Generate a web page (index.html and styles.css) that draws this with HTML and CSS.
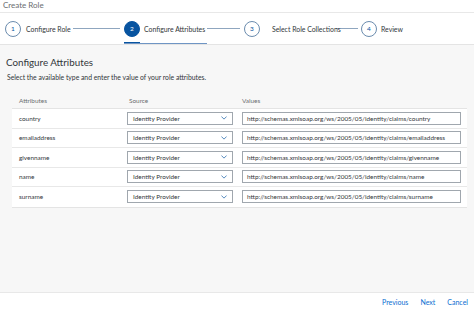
FILE: index.html
```html
<!DOCTYPE html>
<html>
<head>
<meta charset="utf-8">
<link rel="stylesheet" href="styles.css">
</head>
<body>
<div class="page">
  <header class="titlebar">Create Role</header>
  <nav class="steps">
    <div class="step s1"><span class="circle">1</span><span class="label w1">Configure Role</span></div>
    <span class="line l1"></span>
    <div class="step s2 active"><span class="circle">2</span><span class="label w2">Configure Attributes</span></div>
    <span class="line l2"></span>
    <div class="step s3"><span class="circle">3</span><span class="label w3">Select Role Collections</span></div>
    <span class="line l3"></span>
    <div class="step s4"><span class="circle">4</span><span class="label">Review</span></div>
  </nav>
  <main class="content">
    <h1 class="heading">Configure Attributes</h1>
    <p class="desc">Select the available type and enter the value of your role attributes.</p>
    <div class="card">
      <div class="row head">
        <div class="cell c1">Attributes</div>
        <div class="cell c2">Source</div>
        <div class="cell c3">Values</div>
      </div>
      <div class="row">
        <div class="cell c1">country</div>
        <div class="cell"><div class="select"><span>Identity Provider</span><svg class="chev" viewBox="0 0 8 5"><path d="M0.5 0.5 L4 4 L7.5 0.5" fill="none" stroke="#0854a0" stroke-width="0.9"/></svg></div></div>
        <div class="cell"><div class="input">http://schemas.xmlsoap.org/ws/2005/05/identity/claims/country</div></div>
      </div>
      <div class="row">
        <div class="cell c1">emailaddress</div>
        <div class="cell"><div class="select"><span>Identity Provider</span><svg class="chev" viewBox="0 0 8 5"><path d="M0.5 0.5 L4 4 L7.5 0.5" fill="none" stroke="#0854a0" stroke-width="0.9"/></svg></div></div>
        <div class="cell"><div class="input">http://schemas.xmlsoap.org/ws/2005/05/identity/claims/emailaddress</div></div>
      </div>
      <div class="row">
        <div class="cell c1">givenname</div>
        <div class="cell"><div class="select"><span>Identity Provider</span><svg class="chev" viewBox="0 0 8 5"><path d="M0.5 0.5 L4 4 L7.5 0.5" fill="none" stroke="#0854a0" stroke-width="0.9"/></svg></div></div>
        <div class="cell"><div class="input">http://schemas.xmlsoap.org/ws/2005/05/identity/claims/givenname</div></div>
      </div>
      <div class="row">
        <div class="cell c1">name</div>
        <div class="cell"><div class="select"><span>Identity Provider</span><svg class="chev" viewBox="0 0 8 5"><path d="M0.5 0.5 L4 4 L7.5 0.5" fill="none" stroke="#0854a0" stroke-width="0.9"/></svg></div></div>
        <div class="cell"><div class="input">http://schemas.xmlsoap.org/ws/2005/05/identity/claims/name</div></div>
      </div>
      <div class="row last">
        <div class="cell c1">surname</div>
        <div class="cell"><div class="select"><span>Identity Provider</span><svg class="chev" viewBox="0 0 8 5"><path d="M0.5 0.5 L4 4 L7.5 0.5" fill="none" stroke="#0854a0" stroke-width="0.9"/></svg></div></div>
        <div class="cell"><div class="input">http://schemas.xmlsoap.org/ws/2005/05/identity/claims/surname</div></div>
      </div>
    </div>
  </main>
  <footer class="footer">
    <a class="btn">Previous</a>
    <a class="btn">Next</a>
    <a class="btn">Cancel</a>
  </footer>
</div>
</body>
</html>
```

FILE: styles.css
```css
html, body {
  margin: 0;
  padding: 0;
  background: #ffffff;
}
body {
  font-family: "Lato", "Noto Sans", sans-serif;
  color: #32363a;
  width: 474px;
  height: 311px;
  overflow: hidden;
}
.page {
  display: flex;
  flex-direction: column;
  height: 311px;
}
.titlebar {
  height: 13px;
  box-sizing: border-box;
  line-height: 10px;
  font-size: 8px;
  color: #6a6d70;
  padding-left: 3px;
  border-bottom: 1px solid #e8e8e8;
}
.steps {
  height: 32px;
  box-sizing: border-box;
  display: flex;
  align-items: center;
  padding-left: 5px;
  border-bottom: 1px solid #e4e4e4;
  background: #fff;
}
.step {
  display: flex;
  align-items: center;
  gap: 5px;
  height: 100%;
  position: relative;
}
.circle {
  width: 16px;
  height: 16px;
  flex: none;
  box-sizing: border-box;
  border: 1px solid #6b8cae;
  border-radius: 50%;
  display: flex;
  align-items: center;
  justify-content: center;
  font-size: 6.5px;
  color: #0854a0;
  background: #fff;
}
.label {
  font-size: 6.9px;
  color: #32363a;
  white-space: nowrap;
}
.w1 { width: 44px; }
.w2 { width: 59px; }
.w3 { width: 60px; }
.s2 { gap: 4px; }
.s3 { gap: 12px; }
.s4 { gap: 4px; }
.active .circle {
  background: #0854a0;
  border-color: #0854a0;
  color: #fff;
}
.active::after {
  content: "";
  position: absolute;
  left: 0;
  right: -4px;
  bottom: 0;
  height: 1px;
  background: #6f95c4;
}
.active::before {
  content: "";
  position: absolute;
  left: 0;
  width: 16px;
  bottom: 0;
  height: 2px;
  background: #0854a0;
}
.line {
  height: 1px;
  background: #8fa6bf;
  display: block;
  flex: none;
}
.l1 { width: 47px; margin: 0 4px 0 3px; }
.l2 { width: 33px; margin: 0 4px 0 4px; }
.l3 { width: 22px; margin: 0 3px 0 4px; }
.content {
  flex: 1;
  background: #f7f7f7;
  padding: 10px 7px 0 12px;
  border-bottom: 1px solid #e8e8e8;
}
.heading {
  margin: 0 0 0 -6px;
  font-size: 9.8px;
  font-weight: 400;
  line-height: 14px;
  color: #32363a;
}
.desc {
  margin: 4px 0 10px -5px;
  font-size: 6.8px;
  line-height: 9px;
  color: #32363a;
}
.card {
  background: #fff;
  width: 455px;
  border-bottom: 1px solid #e4e4e4;
}
.row {
  display: grid;
  grid-template-columns: 108px 115px 219px;
  padding-left: 7px;
  height: 19.5px;
  align-items: center;
  border-bottom: 1px solid #e8e8e8;
  box-sizing: border-box;
  font-size: 6.4px;
}
.row.last { border-bottom: none; }
.row.head {
  height: 17px;
  background: #f7f7f7;
  color: #6a6d70;
  border-bottom: 1px solid #e4e4e4;
}
.head .c2 { padding-left: 2px; }
.cell.c1 { color: #32363a; }
.head .cell { color: #6a6d70; }
.select {
  width: 106px;
  height: 13px;
  box-sizing: border-box;
  border: 1px solid #a0a7ae;
  display: flex;
  align-items: center;
  justify-content: space-between;
  padding: 0 5px 0 5px;
  background: #fff;
}
.chev { width: 6px; height: 4px; }
.input {
  width: 219px;
  height: 13px;
  box-sizing: border-box;
  border: 1px solid #a0a7ae;
  display: flex;
  align-items: center;
  padding-left: 4px;
  white-space: nowrap;
  overflow: hidden;
  background: #fff;
}
.footer {
  height: 18px;
  display: flex;
  align-items: center;
  justify-content: flex-end;
  gap: 12px;
  padding-right: 6px;
}
.btn {
  font-size: 7px;
  color: #0a6ed1;
}
```
